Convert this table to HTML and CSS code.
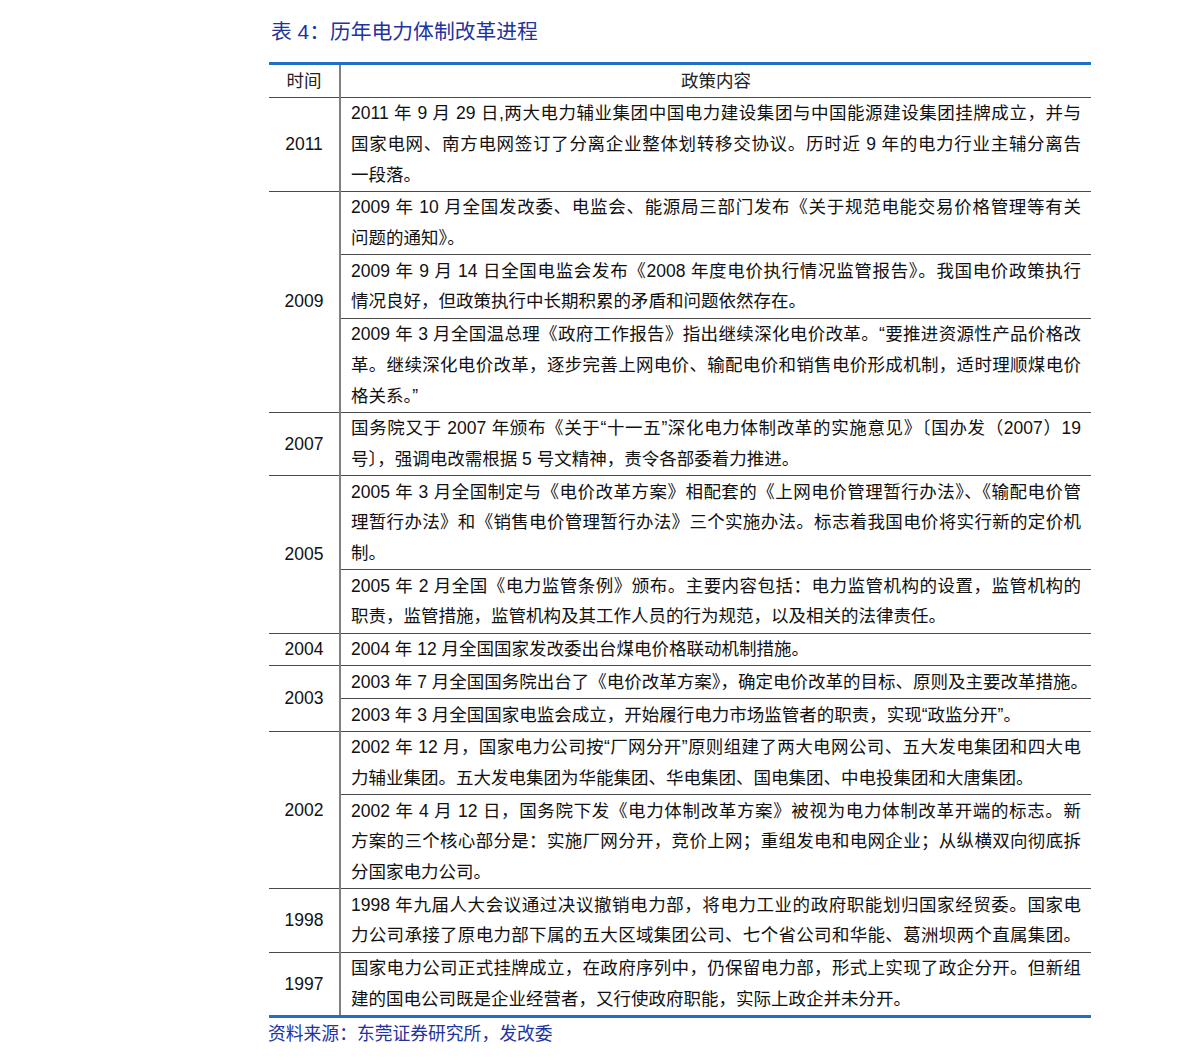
FILE: index.html
```html
<!DOCTYPE html>
<html lang="zh-CN">
<head>
<meta charset="utf-8">
<title>表 4：历年电力体制改革进程</title>
<link rel="stylesheet" href="styles.css">
</head>
<body>
<div class="page">
  <h1 class="title">表 4：历年电力体制改革进程</h1>
  <table class="reform">
    <colgroup><col class="col-year"><col class="col-content"></colgroup>
    <thead>
      <tr><th class="year">时间</th><th class="content head">政策内容</th></tr>
    </thead>
    <tbody>
      <tr><td class="year">2011</td><td class="content">
        <span class="ln j">2011 年 9 月 29 日,两大电力辅业集团中国电力建设集团与中国能源建设集团挂牌成立，并与</span>
        <span class="ln j">国家电网、南方电网签订了分离企业整体划转移交协议。历时近 9 年的电力行业主辅分离告</span>
        <span class="ln">一段落。</span>
      </td></tr>
      <tr><td class="year" rowspan="3">2009</td><td class="content">
        <span class="ln j">2009 年 10 月全国发改委、电监会、能源局三部门发布《关于规范电能交易价格管理等有关</span>
        <span class="ln">问题的通知》。</span>
      </td></tr>
      <tr><td class="content">
        <span class="ln j">2009 年 9 月 14 日全国电监会发布《2008 年度电价执行情况监管报告》。我国电价政策执行</span>
        <span class="ln">情况良好，但政策执行中长期积累的矛盾和问题依然存在。</span>
      </td></tr>
      <tr><td class="content">
        <span class="ln j">2009 年 3 月全国温总理《政府工作报告》指出继续深化电价改革。“要推进资源性产品价格改</span>
        <span class="ln j">革。继续深化电价改革，逐步完善上网电价、输配电价和销售电价形成机制，适时理顺煤电价</span>
        <span class="ln">格关系。”</span>
      </td></tr>
      <tr><td class="year">2007</td><td class="content">
        <span class="ln j">国务院又于 2007 年颁布《关于“十一五”深化电力体制改革的实施意见》〔国办发（2007）19</span>
        <span class="ln">号〕，强调电改需根据 5 号文精神，责令各部委着力推进。</span>
      </td></tr>
      <tr><td class="year" rowspan="2">2005</td><td class="content">
        <span class="ln j">2005 年 3 月全国制定与《电价改革方案》相配套的《上网电价管理暂行办法》、《输配电价管</span>
        <span class="ln j">理暂行办法》和《销售电价管理暂行办法》三个实施办法。标志着我国电价将实行新的定价机</span>
        <span class="ln">制。</span>
      </td></tr>
      <tr><td class="content">
        <span class="ln j">2005 年 2 月全国《电力监管条例》颁布。主要内容包括：电力监管机构的设置，监管机构的</span>
        <span class="ln">职责，监管措施，监管机构及其工作人员的行为规范，以及相关的法律责任。</span>
      </td></tr>
      <tr><td class="year">2004</td><td class="content">
        <span class="ln">2004 年 12 月全国国家发改委出台煤电价格联动机制措施。</span>
      </td></tr>
      <tr><td class="year" rowspan="2">2003</td><td class="content">
        <span class="ln j">2003 年 7 月全国国务院出台了《电价改革方案》，确定电价改革的目标、原则及主要改革措施。</span>
      </td></tr>
      <tr><td class="content">
        <span class="ln">2003 年 3 月全国国家电监会成立，开始履行电力市场监管者的职责，实现“政监分开”。</span>
      </td></tr>
      <tr><td class="year" rowspan="2">2002</td><td class="content">
        <span class="ln j">2002 年 12 月，国家电力公司按“厂网分开”原则组建了两大电网公司、五大发电集团和四大电</span>
        <span class="ln">力辅业集团。五大发电集团为华能集团、华电集团、国电集团、中电投集团和大唐集团。</span>
      </td></tr>
      <tr><td class="content">
        <span class="ln j">2002 年 4 月 12 日，国务院下发《电力体制改革方案》被视为电力体制改革开端的标志。新</span>
        <span class="ln j">方案的三个核心部分是：实施厂网分开，竞价上网；重组发电和电网企业；从纵横双向彻底拆</span>
        <span class="ln">分国家电力公司。</span>
      </td></tr>
      <tr><td class="year">1998</td><td class="content">
        <span class="ln j">1998 年九届人大会议通过决议撤销电力部，将电力工业的政府职能划归国家经贸委。国家电</span>
        <span class="ln j">力公司承接了原电力部下属的五大区域集团公司、七个省公司和华能、葛洲坝两个直属集团。</span>
      </td></tr>
      <tr class="last"><td class="year">1997</td><td class="content">
        <span class="ln j">国家电力公司正式挂牌成立，在政府序列中，仍保留电力部，形式上实现了政企分开。但新组</span>
        <span class="ln">建的国电公司既是企业经营者，又行使政府职能，实际上政企并未分开。</span>
      </td></tr>
    </tbody>
  </table>
  <p class="source">资料来源：东莞证券研究所，发改委</p>
</div>
</body>
</html>
```

FILE: styles.css
```css
html, body {
  margin: 0;
  padding: 0;
  background: #ffffff;
}

body {
  font-family: "Liberation Sans", "Noto Sans CJK SC", sans-serif;
  color: #111111;
}

.page {
  width: 822px;
  padding: 18px 0 0 269px;
}

.title {
  margin: 0 0 0 2px;
  font-size: 20.8px;
  font-weight: normal;
  line-height: 28px;
  color: #2233a0;
}

.reform {
  margin-top: 16px;
  width: 822px;
  table-layout: fixed;
  border-collapse: collapse;
  border-top: 3px solid #1f6fc4;
  border-bottom: 3px solid #1f6fc4;
  font-size: 17.5px;
  line-height: 30.7px;
}

.col-year {
  width: 71px;
}

.reform th,
.reform td {
  padding: 0.5px 0;
  border-bottom: 1px solid #4a4a4a;
  font-weight: normal;
  vertical-align: middle;
}

.reform tr.last td {
  border-bottom: none;
}

.year {
  text-align: center;
  color: #111111;
}

.content {
  border-left: 2px solid #808080;
  padding-left: 10px !important;
  padding-right: 10px !important;
  text-align: left;
}

.content.head {
  text-align: center;
  color: #222222;
}

th.year {
  color: #222222;
}

.ln {
  display: block;
  white-space: nowrap;
}

.ln.j {
  text-align: justify;
  text-align-last: justify;
}

.source {
  margin: 3px 0 0 -1px;
  font-size: 17.8px;
  line-height: 26px;
  color: #2233a0;
}
```
